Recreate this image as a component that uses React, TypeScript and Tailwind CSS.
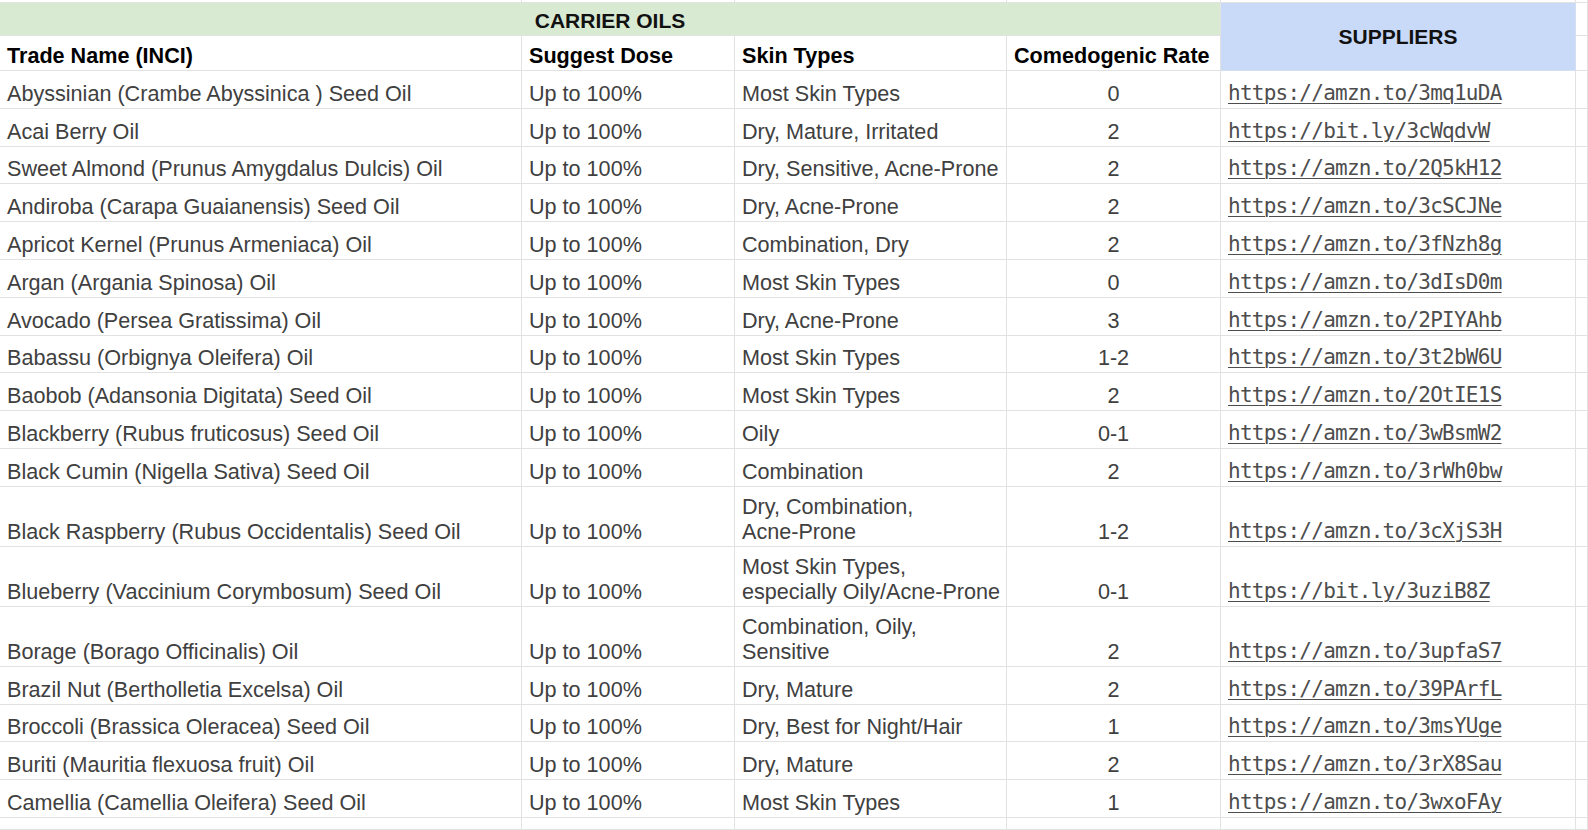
import React from "react";

const GRID = "grid grid-cols-[522px_213px_272px_214px_355px_12px]";
const LINE = "border-[#e2e2e2]";

type Row = {
  name: string;
  dose: string;
  skin: string[];
  rate: string;
  url: string;
  tall?: boolean;
};

const rows: Row[] = [
  { name: "Abyssinian (Crambe Abyssinica ) Seed Oil", dose: "Up to 100%", skin: ["Most Skin Types"], rate: "0", url: "https://amzn.to/3mq1uDA" },
  { name: "Acai Berry Oil", dose: "Up to 100%", skin: ["Dry, Mature, Irritated"], rate: "2", url: "https://bit.ly/3cWqdvW" },
  { name: "Sweet Almond (Prunus Amygdalus Dulcis) Oil", dose: "Up to 100%", skin: ["Dry, Sensitive, Acne-Prone"], rate: "2", url: "https://amzn.to/2Q5kH12" },
  { name: "Andiroba (Carapa Guaianensis) Seed Oil", dose: "Up to 100%", skin: ["Dry, Acne-Prone"], rate: "2", url: "https://amzn.to/3cSCJNe" },
  { name: "Apricot Kernel (Prunus Armeniaca) Oil", dose: "Up to 100%", skin: ["Combination, Dry"], rate: "2", url: "https://amzn.to/3fNzh8g" },
  { name: "Argan (Argania Spinosa) Oil", dose: "Up to 100%", skin: ["Most Skin Types"], rate: "0", url: "https://amzn.to/3dIsD0m" },
  { name: "Avocado (Persea Gratissima) Oil", dose: "Up to 100%", skin: ["Dry, Acne-Prone"], rate: "3", url: "https://amzn.to/2PIYAhb" },
  { name: "Babassu (Orbignya Oleifera) Oil", dose: "Up to 100%", skin: ["Most Skin Types"], rate: "1-2", url: "https://amzn.to/3t2bW6U" },
  { name: "Baobob (Adansonia Digitata) Seed Oil", dose: "Up to 100%", skin: ["Most Skin Types"], rate: "2", url: "https://amzn.to/2OtIE1S" },
  { name: "Blackberry (Rubus fruticosus) Seed Oil", dose: "Up to 100%", skin: ["Oily"], rate: "0-1", url: "https://amzn.to/3wBsmW2" },
  { name: "Black Cumin (Nigella Sativa) Seed Oil", dose: "Up to 100%", skin: ["Combination"], rate: "2", url: "https://amzn.to/3rWh0bw" },
  { name: "Black Raspberry (Rubus Occidentalis) Seed Oil", dose: "Up to 100%", skin: ["Dry, Combination,", "Acne-Prone"], rate: "1-2", url: "https://amzn.to/3cXjS3H", tall: true },
  { name: "Blueberry (Vaccinium Corymbosum) Seed Oil", dose: "Up to 100%", skin: ["Most Skin Types,", "especially Oily/Acne-Prone"], rate: "0-1", url: "https://bit.ly/3uziB8Z", tall: true },
  { name: "Borage (Borago Officinalis) Oil", dose: "Up to 100%", skin: ["Combination, Oily,", "Sensitive"], rate: "2", url: "https://amzn.to/3upfaS7", tall: true },
  { name: "Brazil Nut (Bertholletia Excelsa) Oil", dose: "Up to 100%", skin: ["Dry, Mature"], rate: "2", url: "https://amzn.to/39PArfL" },
  { name: "Broccoli (Brassica Oleracea) Seed Oil", dose: "Up to 100%", skin: ["Dry, Best for Night/Hair"], rate: "1", url: "https://amzn.to/3msYUge" },
  { name: "Buriti (Mauritia flexuosa fruit) Oil", dose: "Up to 100%", skin: ["Dry, Mature"], rate: "2", url: "https://amzn.to/3rX8Sau" },
  { name: "Camellia (Camellia Oleifera) Seed Oil", dose: "Up to 100%", skin: ["Most Skin Types"], rate: "1", url: "https://amzn.to/3wxoFAy" },
];

function Cell({ children, className = "" }: { children?: React.ReactNode; className?: string }) {
  return (
    <div className={`flex flex-col justify-end overflow-hidden whitespace-nowrap border-r border-b ${LINE} px-[7px] pb-[2px] ${className}`}>
      {children}
    </div>
  );
}

function EmptyRow({ h }: { h: string }) {
  return (
    <div className={`${GRID} ${h}`}>
      {[0, 1, 2, 3, 4, 5].map((i) => (
        <div key={i} className={`border-r border-b ${LINE}`} />
      ))}
    </div>
  );
}

export default function App() {
  return (
    <div className="h-[830px] w-[1588px] overflow-hidden bg-white font-['Liberation_Sans',Arial,sans-serif] text-[21.6px] leading-[25px] text-[#404040]">
      {/* Top partial row */}
      <EmptyRow h="h-[3px]" />

      {/* Header block */}
      <div className={`${GRID} grid-rows-[33px_35px]`}>
        <div className={`col-span-4 flex items-center justify-center border-r border-b ${LINE} bg-[#d9ead3] pt-[2px] text-[21px] font-bold text-[#111]`}>
          CARRIER OILS
        </div>
        <div className="row-span-2 flex items-center justify-center border-r border-b border-[#d4dff0] bg-[#c9daf8] text-[21px] font-bold text-[#111]">
          SUPPLIERS
        </div>
        <div className={`border-r border-b ${LINE}`} />
        <Cell className="font-bold text-black">Trade Name (INCI)</Cell>
        <Cell className="font-bold text-black">Suggest Dose</Cell>
        <Cell className="font-bold text-black">Skin Types</Cell>
        <Cell className="font-bold text-black">Comedogenic Rate</Cell>
        <div className={`border-r border-b ${LINE}`} />
      </div>

      {/* Data rows */}
      {rows.map((r) => (
        <div key={r.name} className={`${GRID} ${r.tall ? "h-[60px]" : "h-[37.8px]"}`}>
          <Cell>{r.name}</Cell>
          <Cell>{r.dose}</Cell>
          <Cell>
            {r.skin.map((s) => (
              <span key={s}>{s}</span>
            ))}
          </Cell>
          <Cell className="items-center">{r.rate}</Cell>
          <Cell className="px-[6px]">
            <a
              href="#"
              className="font-['DejaVu_Sans_Mono',monospace] text-[21px] tracking-[-0.75px] text-[#4d4d4d] underline decoration-1 underline-offset-[3px]"
            >
              {r.url}
            </a>
          </Cell>
          <div className={`border-r border-b ${LINE}`} />
        </div>
      ))}

      <EmptyRow h="h-[12px]" />
    </div>
  );
}
